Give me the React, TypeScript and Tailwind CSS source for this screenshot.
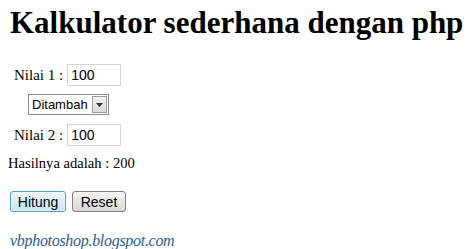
export default function App() {
  return (
    <div className="w-[474px] h-[249px] bg-white overflow-hidden text-black font-['Liberation_Serif',serif]">
      <h1 className="pl-[10px] pt-[8px] text-[31px] leading-[30px] font-bold whitespace-nowrap">Kalkulator sederhana dengan php</h1>

      <div className="mt-[26px] flex items-center h-[22px] pl-[14px] gap-[4px] text-[15px]">
        <span>Nilai 1 :</span>
        <div className="w-[54px] h-[22px] border border-[#d4d4d4] flex items-center pl-[3px] font-['Liberation_Sans',sans-serif] text-[14px]">100</div>
      </div>

      <div className="mt-[8px] pl-[28px] flex">
        <div className="w-[81px] h-[21px] border border-[#8a8a8a] flex items-center font-['Liberation_Sans',sans-serif] text-[13px]">
          <span className="flex-1 pl-[3px]">Ditambah</span>
          <div className="w-[15px] h-[17px] mr-[1px] border border-[#9a9a9a] bg-gradient-to-b from-[#f4f4f4] to-[#d8d8d8] flex items-center justify-center">
            <svg width="7" height="4" viewBox="0 0 7 4"><path d="M0 0h7L3.5 4z" fill="#333" /></svg>
          </div>
        </div>
      </div>

      <div className="mt-[9px] flex items-center h-[22px] pl-[14px] gap-[4px] text-[15px]">
        <span>Nilai 2 :</span>
        <div className="w-[54px] h-[22px] border border-[#d4d4d4] flex items-center pl-[3px] font-['Liberation_Sans',sans-serif] text-[14px]">100</div>
      </div>

      <p className="pl-[8px] mt-[8px] text-[14.6px] leading-[18px]">Hasilnya adalah : 200</p>

      <div className="mt-[19px] pl-[10px] flex gap-[6px] font-['Liberation_Sans',sans-serif] text-[14px]">
        <button className="w-[56px] h-[21px] rounded-[3px] border border-[#5a9cc0] bg-gradient-to-b from-[#eef7fc] to-[#c9e6f5] shadow-[inset_0_0_0_1px_#ffffff80]">Hitung</button>
        <button className="w-[54px] h-[21px] rounded-[3px] border border-[#808080] bg-gradient-to-b from-[#f4f4f4] to-[#d8d8d8]">Reset</button>
      </div>

      <p className="pl-[10px] mt-[20px] text-[16px] leading-[18px] italic text-[#2b5d8c] tracking-[-0.3px]">vbphotoshop.blogspot.com</p>
    </div>
  );
}
